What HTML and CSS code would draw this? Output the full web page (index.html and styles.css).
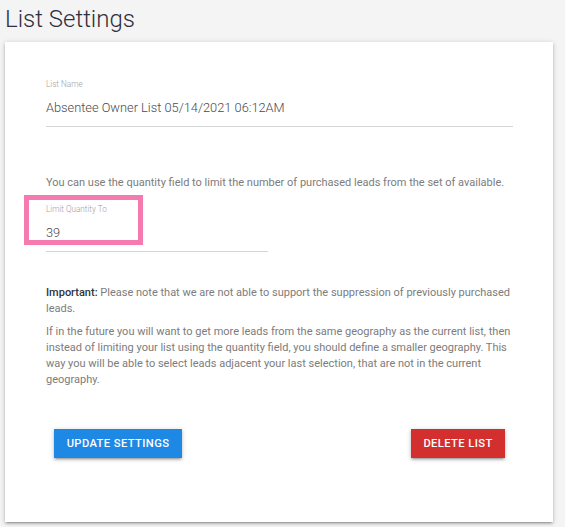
FILE: index.html
```html
<!DOCTYPE html>
<html lang="en">
<head>
<meta charset="utf-8">
<title>List Settings</title>
<link rel="stylesheet" href="styles.css">
</head>
<body>
<h1 class="page-title">List Settings</h1>
<div class="card">
  <div class="field">
    <label class="field-label">List Name</label>
    <div class="field-input">Absentee Owner List 05/14/2021 06:12AM</div>
  </div>
  <p class="text intro">You can use the quantity field to limit the number of purchased leads from the set of available.</p>
  <div class="field field-qty">
    <label class="field-label">Limit Quantity To</label>
    <div class="field-input">39</div>
    <div class="highlight"></div>
  </div>
  <p class="text important"><strong>Important:</strong> Please note that we are not able to support the suppression of previously purchased leads.</p>
  <p class="text">If in the future you will want to get more leads from the same geography as the current list, then instead of limiting your list using the quantity field, you should define a smaller geography. This way you will be able to select leads adjacent your last selection, that are not in the current geography.</p>
  <div class="actions">
    <button class="btn btn-blue">Update Settings</button>
    <button class="btn btn-red">Delete List</button>
  </div>
</div>
</body>
</html>
```
FILE: styles.css
```css
* { box-sizing: border-box; }
body {
  margin: 0;
  background: #f4f4f4;
  font-family: Roboto, "Liberation Sans", Arial, sans-serif;
  width: 565px;
  height: 527px;
  overflow: hidden;
}
.page-title {
  margin: 5px 0 9px 5px;
  font-size: 24px;
  font-weight: 300;
  line-height: 28px;
  color: #2f2f3f;
}
.card {
  margin-left: 5px;
  width: 548px;
  background: #fff;
  padding: 37px 40px 64px 41px;
  box-shadow: 0 2px 2px 0 rgba(0,0,0,.14), 0 3px 1px -2px rgba(0,0,0,.12), 0 1px 5px 0 rgba(0,0,0,.2);
}
.field { position: relative; }
.field-label {
  display: block;
  font-size: 8.2px;
  font-weight: 300;
  line-height: 10px;
  color: #a0a0a0;
}
.field-input {
  height: 38px;
  line-height: 37px;
  font-size: 12.8px;
  font-weight: 300;
  color: #4a4a4a;
  border-bottom: 1px solid #d4d4d4;
}
.field-qty { width: 222px; margin-top: 13px; }
.highlight {
  position: absolute;
  left: -22px;
  top: -9px;
  width: 119px;
  height: 50px;
  border: 5px solid #f47ab0;
}
.text {
  margin: 0;
  font-size: 11px;
  font-weight: 400;
  line-height: 16px;
  color: #7c7c7c;
}
.text + .text { margin-top: 7px; }
.intro { margin-top: 48px; }
.important { margin-top: 33px; }
.important strong { color: #333; font-weight: 500; }
.actions {
  display: flex;
  justify-content: space-between;
  padding: 0 8px;
  margin-top: 41px;
}
.btn {
  border: none;
  height: 29px;
  padding: 0;
  white-space: nowrap;
  text-align: center;
  font-family: Roboto, "Liberation Sans", Arial, sans-serif;
  font-size: 11.2px;
  font-weight: 500;
  letter-spacing: 0.4px;
  text-transform: uppercase;
  color: #fff;
  box-shadow: 0 2px 2px 0 rgba(0,0,0,.14), 0 3px 1px -2px rgba(0,0,0,.12), 0 1px 5px 0 rgba(0,0,0,.2);
}
.btn-blue { background: #1e88e5; width: 128px; }
.btn-red { background: #d32f2f; width: 94px; }
```
